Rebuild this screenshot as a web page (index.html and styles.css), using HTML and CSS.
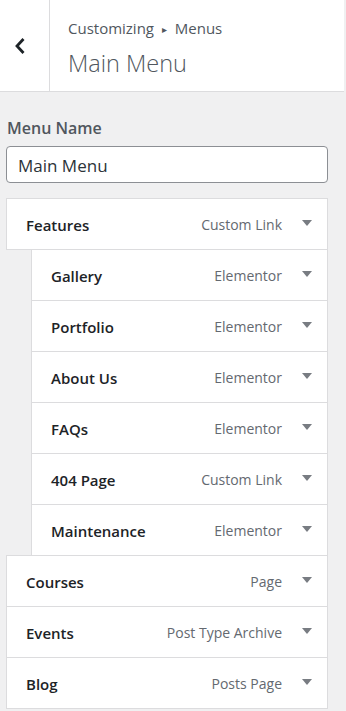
FILE: index.html
```html
<!DOCTYPE html>
<html>
<head>
<meta charset="utf-8">
<link rel="stylesheet" href="styles.css">
</head>
<body>
<div class="header">
  <div class="back">
    <svg width="12" height="18" viewBox="0 0 12 18"><polyline points="9.5,2 3,9 9.5,16" fill="none" stroke="#1d2327" stroke-width="2.8" stroke-linecap="butt" stroke-linejoin="miter"/></svg>
  </div>
  <div class="titles">
    <div class="crumb">Customizing <span class="tri">&#9656;</span> Menus</div>
    <div class="title">Main Menu</div>
  </div>
</div>
<div class="section">
  <div class="label">Menu Name</div>
  <div class="input">Main Menu</div>
  <ul class="menu">
    <li class="item"><span class="name">Features</span><span class="type">Custom Link</span><span class="arrow"></span></li>
    <li class="item sub"><span class="name">Gallery</span><span class="type">Elementor</span><span class="arrow"></span></li>
    <li class="item sub"><span class="name">Portfolio</span><span class="type">Elementor</span><span class="arrow"></span></li>
    <li class="item sub"><span class="name">About Us</span><span class="type">Elementor</span><span class="arrow"></span></li>
    <li class="item sub"><span class="name">FAQs</span><span class="type">Elementor</span><span class="arrow"></span></li>
    <li class="item sub"><span class="name">404 Page</span><span class="type">Custom Link</span><span class="arrow"></span></li>
    <li class="item sub"><span class="name">Maintenance</span><span class="type">Elementor</span><span class="arrow"></span></li>
    <li class="item"><span class="name">Courses</span><span class="type">Page</span><span class="arrow"></span></li>
    <li class="item"><span class="name">Events</span><span class="type">Post Type Archive</span><span class="arrow"></span></li>
    <li class="item"><span class="name">Blog</span><span class="type">Posts Page</span><span class="arrow"></span></li>
  </ul>
</div>
</body>
</html>
```
FILE: styles.css
```css
html, body {
  margin: 0;
  padding: 0;
}
body {
  background: #f0f0f1;
  font-family: "Open Sans", "Noto Sans", sans-serif;
  width: 346px;
  height: 711px;
  overflow: hidden;
}
.header {
  width: 344px;
  height: 91px;
  background: #fff;
  border-bottom: 1px solid #dcdcde;
  display: flex;
}
.back {
  width: 50px;
  border-right: 1px solid #dcdcde;
  display: flex;
  align-items: center;
  justify-content: center;
  padding: 0 10px 0 0;
  box-sizing: border-box;
}
.titles {
  padding-left: 18px;
  padding-top: 16px;
}
.crumb {
  font-size: 15px;
  color: #50575e;
  line-height: 24px;
}
.tri {
  font-size: 10px;
  vertical-align: 1px;
  margin: 0 4px;
}
.title {
  font-size: 23.5px;
  font-weight: 300;
  color: #50575e;
  line-height: 32px;
  margin-top: 6px;
}
.section {
  padding: 24px 18px 0 6px;
}
.label {
  font-size: 16px;
  font-weight: 600;
  color: #50575e;
  line-height: 24px;
  padding-left: 1px;
}
.input {
  margin-top: 6px;
  height: 37px;
  box-sizing: border-box;
  border: 1px solid #8c8f94;
  border-radius: 4px;
  background: #fff;
  padding: 2px 0 0 11px;
  font-size: 17px;
  color: #2c3338;
  line-height: 33px;
}
.menu {
  list-style: none;
  margin: 15px 0 0;
  padding: 0;
}
.item {
  height: 52px;
  box-sizing: border-box;
  background: #fff;
  border: 1px solid #dcdcde;
  margin-top: -1px;
  display: flex;
  align-items: center;
  padding-left: 19px;
  padding-top: 1px;
}
.item:first-child {
  margin-top: 0;
}
.item.sub {
  margin-left: 25px;
}
.name {
  flex: 1;
  font-size: 15px;
  font-weight: 600;
  color: #1d2327;
}
.type {
  font-size: 14px;
  color: #646970;
}
.arrow {
  width: 0;
  height: 0;
  border-left: 5px solid transparent;
  border-right: 5px solid transparent;
  border-top: 6px solid #787c82;
  margin-left: 20px;
  margin-right: 15px;
  margin-bottom: 3px;
}
```
